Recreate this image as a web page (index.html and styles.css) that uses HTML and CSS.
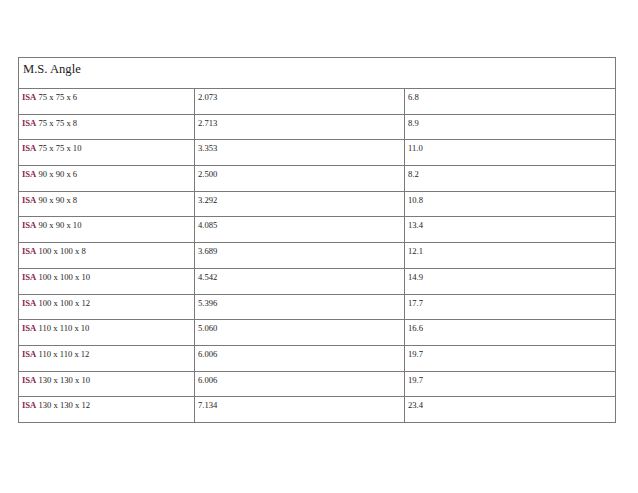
FILE: index.html
```html
<!DOCTYPE html>
<html>
<head>
<meta charset="utf-8">
<link rel="stylesheet" href="styles.css">
</head>
<body>
<table class="grid">
<colgroup><col class="c1"><col class="c2"><col class="c3"></colgroup>
<tr class="head"><td colspan="3">M.S. Angle</td></tr>
<tr><td><b class="isa">ISA</b> 75 x 75 x 6</td><td>2.073</td><td>6.8</td></tr>
<tr><td><b class="isa">ISA</b> 75 x 75 x 8</td><td>2.713</td><td>8.9</td></tr>
<tr><td><b class="isa">ISA</b> 75 x 75 x 10</td><td>3.353</td><td>11.0</td></tr>
<tr><td><b class="isa">ISA</b> 90 x 90 x 6</td><td>2.500</td><td>8.2</td></tr>
<tr><td><b class="isa">ISA</b> 90 x 90 x 8</td><td>3.292</td><td>10.8</td></tr>
<tr><td><b class="isa">ISA</b> 90 x 90 x 10</td><td>4.085</td><td>13.4</td></tr>
<tr><td><b class="isa">ISA</b> 100 x 100 x 8</td><td>3.689</td><td>12.1</td></tr>
<tr><td><b class="isa">ISA</b> 100 x 100 x 10</td><td>4.542</td><td>14.9</td></tr>
<tr><td><b class="isa">ISA</b> 100 x 100 x 12</td><td>5.396</td><td>17.7</td></tr>
<tr><td><b class="isa">ISA</b> 110 x 110 x 10</td><td>5.060</td><td>16.6</td></tr>
<tr><td><b class="isa">ISA</b> 110 x 110 x 12</td><td>6.006</td><td>19.7</td></tr>
<tr><td><b class="isa">ISA</b> 130 x 130 x 10</td><td>6.006</td><td>19.7</td></tr>
<tr><td><b class="isa">ISA</b> 130 x 130 x 12</td><td>7.134</td><td>23.4</td></tr>
</table>
</body>
</html>
```
FILE: styles.css
```css
html, body { margin: 0; padding: 0; background: #fff; }
body { padding: 57px 0 0 18px; font-family: "Liberation Serif", "Times New Roman", serif; color: #222; }
.grid { border-collapse: collapse; table-layout: fixed; width: 597px; }
.c1 { width: 176px; }
.c2 { width: 210px; }
.c3 { width: 211px; }
.grid td { border: 1px solid #7a7a7a; vertical-align: top; padding: 3px 3px 0 3px; font-size: 8.6px; line-height: 11px; box-sizing: border-box; }
.grid tr { height: 25.7px; }
.grid .head td { font-size: 12.6px; line-height: 16px; padding: 3px 4px 0 4px; }
.grid .head { height: 31px; }
.isa { color: #8a2449; font-weight: bold; }
```
